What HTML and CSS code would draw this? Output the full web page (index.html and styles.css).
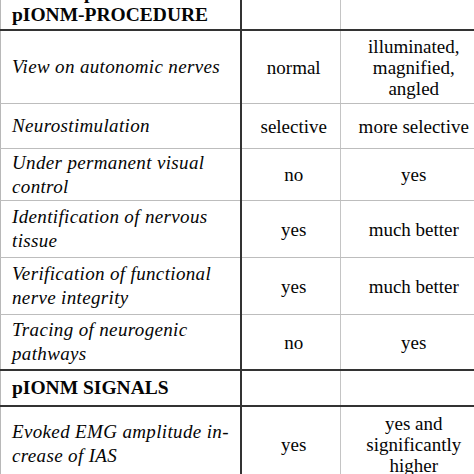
FILE: index.html
```html
<!DOCTYPE html>
<html>
<head>
<meta charset="utf-8">
<link rel="stylesheet" href="styles.css">
</head>
<body>
<div class="viewport">
<table class="cmp">
  <colgroup>
    <col class="c1">
    <col class="c2">
    <col class="c3">
  </colgroup>
  <tr class="sect first">
    <td class="label bold">Basic steps of<br>pIONM-PROCEDURE</td>
    <td class="val"></td>
    <td class="val"></td>
  </tr>
  <tr class="r-view">
    <td class="label it">View on autonomic nerves</td>
    <td class="val">normal</td>
    <td class="val">illuminated,<br>magnified,<br>angled</td>
  </tr>
  <tr class="r-neuro">
    <td class="label it">Neurostimulation</td>
    <td class="val">selective</td>
    <td class="val">more selective</td>
  </tr>
  <tr class="r-under">
    <td class="label it">Under permanent visual<br>control</td>
    <td class="val">no</td>
    <td class="val">yes</td>
  </tr>
  <tr class="r-ident">
    <td class="label it">Identification of nervous<br>tissue</td>
    <td class="val">yes</td>
    <td class="val">much better</td>
  </tr>
  <tr class="r-verif">
    <td class="label it">Verification of functional<br>nerve integrity</td>
    <td class="val">yes</td>
    <td class="val">much better</td>
  </tr>
  <tr class="r-trace before-sect">
    <td class="label it">Tracing of neurogenic<br>pathways</td>
    <td class="val">no</td>
    <td class="val">yes</td>
  </tr>
  <tr class="sect r-signals">
    <td class="label bold">pIONM SIGNALS</td>
    <td class="val"></td>
    <td class="val"></td>
  </tr>
  <tr class="r-emg">
    <td class="label it">Evoked EMG amplitude in-<br>crease of IAS</td>
    <td class="val">yes</td>
    <td class="val">yes and<br>significantly<br>higher</td>
  </tr>
</table>
</div>
</body>
</html>
```
FILE: styles.css
```css
html, body {
  margin: 0;
  padding: 0;
  background: #ffffff;
}
.viewport {
  width: 474px;
  height: 474px;
  overflow: hidden;
}
.cmp {
  border-collapse: collapse;
  table-layout: fixed;
  width: 480px;
  margin-top: -18px;
  font-family: "Liberation Serif", "Times New Roman", serif;
  font-size: 19px;
  color: #050505;
  border-left: 1px solid #b8b8b8;
}
.c1 { width: 240px; }
.c2 { width: 100px; }
.c3 { width: 140px; }

.cmp td {
  padding: 0;
  border-bottom: 1px solid #bdbdbd;
  vertical-align: middle;
}
.cmp td:first-child {
  border-right: 2px solid #333333;
}
.cmp td:nth-child(2) {
  border-right: 1px solid #c4c4c4;
}
.label {
  padding-left: 11px !important;
  text-align: left;
}
.it {
  font-style: italic;
  letter-spacing: 0.35px;
  line-height: 24px;
}
.bold {
  font-weight: bold;
  font-size: 19.5px;
  line-height: 22px;
}
.val {
  text-align: center;
  line-height: 21px;
  padding-left: 6px !important;
}
.sect td {
  border-bottom: 2px solid #333333;
}
.before-sect td {
  border-bottom: 2px solid #333333;
}
.first td {
  padding-bottom: 3px;
}
.r-view td { height: 72px; }
.r-neuro td { height: 44px; }
.r-under td { height: 51px; }
.r-ident td { height: 56px; }
.r-verif td { height: 56px; }
.r-trace td { height: 54px; }
.r-signals td { height: 34px; }
.r-emg td { height: 74px; }
```
